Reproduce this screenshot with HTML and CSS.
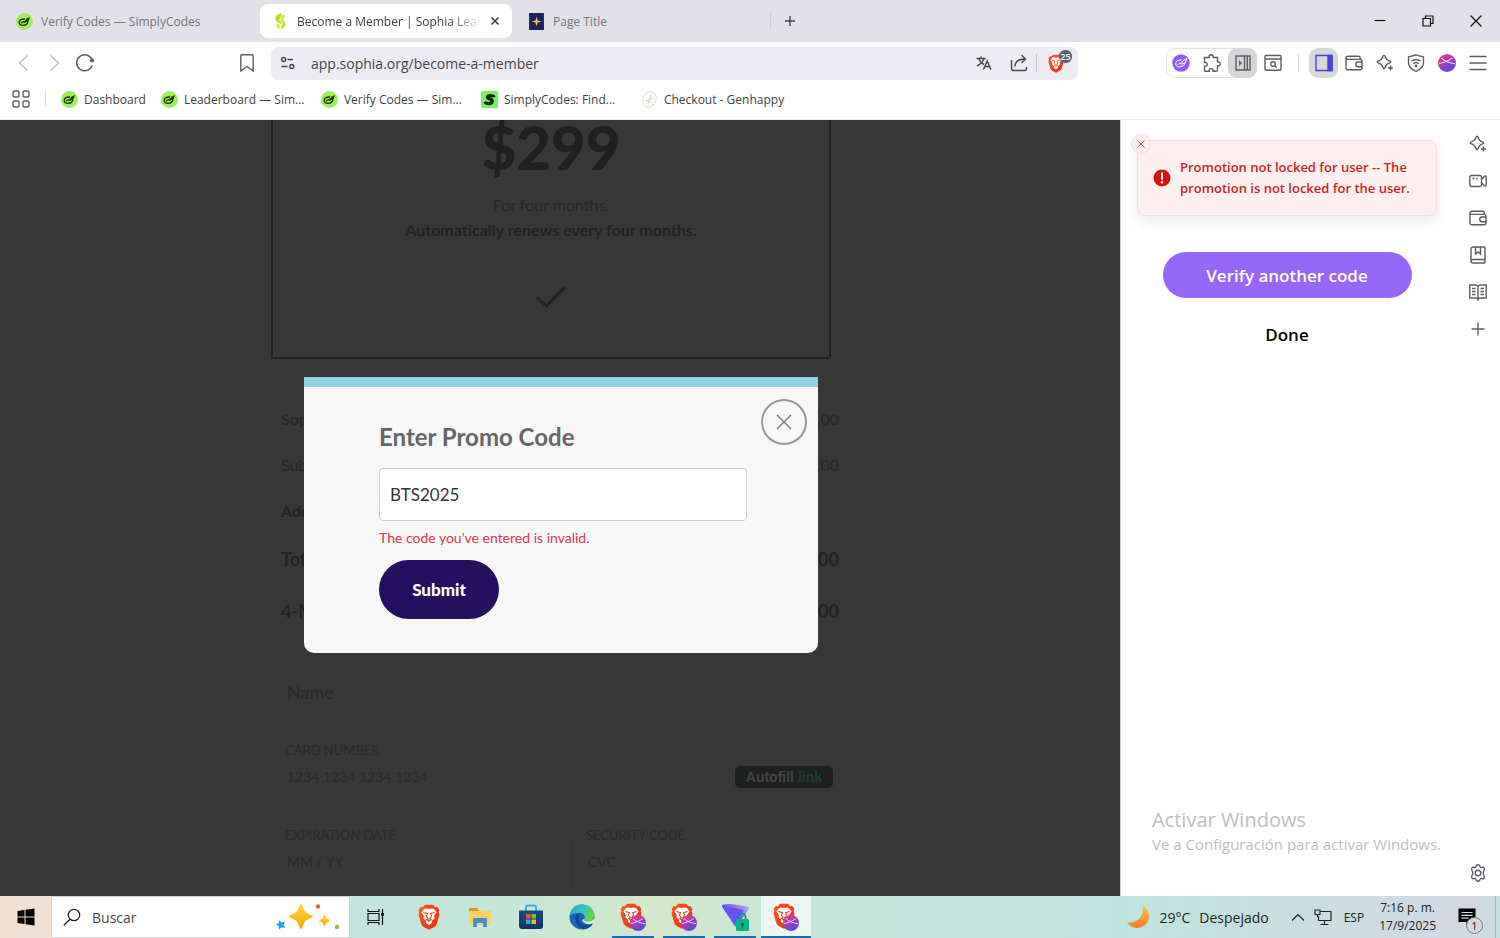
FILE: index.html
```html
<!DOCTYPE html>
<html lang="es">
<head>
<meta charset="utf-8">
<title>Become a Member | Sophia Learning</title>
<link rel="stylesheet" href="styles.css">
</head>
<body>
<svg class="defs" aria-hidden="true">
  <defs>
    <linearGradient id="gStar" x1="0" y1="0" x2="0" y2="1"><stop offset="0" stop-color="#ffd83d"/><stop offset="1" stop-color="#f5a70a"/></linearGradient>
    <linearGradient id="gBall" x1="0" y1="0" x2=".6" y2="1"><stop offset="0" stop-color="#ef3f7f"/><stop offset=".5" stop-color="#a83bb5"/><stop offset="1" stop-color="#5a4be0"/></linearGradient>
    <linearGradient id="gLion" x1="0" y1="0" x2="1" y2="1"><stop offset="0" stop-color="#ff5a20"/><stop offset="1" stop-color="#f0260c"/></linearGradient>
    <linearGradient id="gStore" x1="0" y1="0" x2="0" y2="1"><stop offset="0" stop-color="#1b4b86"/><stop offset="1" stop-color="#12335f"/></linearGradient>
    <linearGradient id="gEdge" x1="0" y1="0" x2="1" y2=".3"><stop offset="0" stop-color="#2aa5e2"/><stop offset=".6" stop-color="#36c4b4"/><stop offset="1" stop-color="#63d64a"/></linearGradient>
    <linearGradient id="gVpn" x1="0" y1="1" x2="1" y2="0"><stop offset="0" stop-color="#4ccbd0"/><stop offset=".45" stop-color="#5b4df0"/><stop offset="1" stop-color="#c9b8f5"/></linearGradient>
    <linearGradient id="gMoon" x1="0" y1="0" x2="0" y2="1"><stop offset="0" stop-color="#fbc437"/><stop offset="1" stop-color="#f0802a"/></linearGradient>
  </defs>
  <symbol id="tag" viewBox="0 0 16 16"><circle cx="8" cy="8" r="8" fill="#9ef05a" stroke="none"/><path d="M8.500 5.700C5.500 5.400 3 6.500 3 8.800c0 2 1.700 2.900 3.700 2.800 2.500-.1 4.100-1.500 4.600-3.600M5 9.700c.7-1.500 2-1.900 3-1" fill="none" stroke="#23380f" stroke-width="1.300"/><path d="M13.300 3.700 10 5.200 7.300 8.400l.7 1.100 3.800-1.700Z" fill="#23380f" stroke="none"/></symbol>
  <symbol id="spark" viewBox="0 0 18 18"><path d="M8 1.200c.5 0 .8.5 1 1.200.8 2.700 1.700 3.700 4.500 4.500 1.600.5 1.600 1.500 0 2-2.800.9-3.700 1.900-4.500 4.600-.5 1.600-1.500 1.600-2 0C6.200 10.800 5.200 9.800 2.500 8.900c-1.600-.5-1.600-1.500 0-2C5.200 6.100 6.200 5.100 7 2.400c.2-.7.5-1.200 1-1.200Z"/><path d="M14.500 11.500v5M12 14h5"/></symbol>
  <symbol id="wallet" viewBox="0 0 18 18"><path d="M15.200 5.400V3.800c0-1-.5-1.500-1.500-1.500H3C1.800 2.300 1 3 1 3.900s.8 1.500 2 1.500h12c1.200 0 2 .7 2 1.800v6.600c0 1.300-.7 2-2 2H3c-1.300 0-2-.7-2-2V3.900M17 8h-3.800c-1.500 0-2.500 1-2.500 2.300s1 2.400 2.500 2.400H17"/></symbol>
  <symbol id="lion" viewBox="0 0 22 26"><path d="M7 .8h8l2.200 2.400 2-.3 2.200 3-.8 2.200.9 2.500-2.700 9.100c-.6 2-1.700 3-7.800 6-6.100-3-7.200-4-7.800-6L.5 10.600l.9-2.500-.8-2.200 2.200-3 2 .3Z" fill="url(#gLion)" stroke="none"/><path d="M8.200 4.400l2.800.7 2.800-.7 2.200.5 2.600 3.700-2.500 3.500.4 2.400-3 2.500 1 1.300-3.500 2.900-3.500-2.900 1-1.300-3-2.500.4-2.400-2.500-3.500L6 4.900Z" fill="#fff" stroke="none"/><path d="M5.500 8.500 9.400 9.600 8.500 12 9.700 14.200M16.500 8.500l-3.900 1.100.9 2.400-1.200 2.200M8.800 15.500l2.200-1 2.200 1-2.200 1.700Z" fill="none" stroke="#f0401a" stroke-width="1.100"/></symbol>
  <symbol id="ball" viewBox="0 0 16 16"><circle cx="8" cy="8" r="8" fill="url(#gBall)" stroke="none"/><path d="M.8 8.500c4-.5 8-2.300 12-4.800M3 3.700c3 2.700 7.200 4.600 12.300 4.900" fill="none" stroke="#f6dcff" stroke-width=".9"/></symbol>
  <symbol id="brave" viewBox="0 0 28 30"><use href="#lion" width="22" height="26" x="1" y="1"/><use href="#ball" x="11" y="13" width="16" height="16"/></symbol>
</svg>

<header class="tabs">
  <div class="tab"><svg class="fav"><use href="#tag"/></svg><span class="title">Verify Codes — SimplyCodes</span></div>
  <div class="tab active"><svg class="fav" viewBox="0 0 16 16"><path d="M8.500.2C4.500 1 2.500 3.500 3.200 6.200 3.600 7.800 5 8.700 7 9.800L9.500 4Z" fill="#b9d930"/><path d="M4 9.200 7.500 11.200 6.800 15.800C4.800 14.500 3.700 12 4 9.200Z" fill="#d9e94a"/><path d="M9.500.5 12 2.800 10 6.500c3 1.500 3.300 4.500 1.200 7-1 1.200-2 1.900-3.200 2.300L9 11 7 9.200Z" fill="#c8e02e"/><path d="M10 1 7.300 6.700l2.500 2-1.900 4.800" fill="none" stroke="#fff" stroke-width=".8"/></svg><span class="title fade">Become a Member | Sophia Learning</span><button class="plain" aria-label="Cerrar pestaña"><svg class="i10" viewBox="0 0 10 10"><path d="m1.500 1.500 7 7m0-7-7 7" stroke-width="1.700"/></svg></button></div>
  <div class="tab"><svg class="fav" viewBox="0 0 16 16"><path d="M1 0h14v16H1Z" fill="#1d2260"/><path d="M8 3.200 9 7l3.800 1L9 9l-1 3.800L7 9 3.200 8 7 7Z" fill="#f5c542"/></svg><span class="title">Page Title</span></div>
  <button class="plain newtab" aria-label="Nueva pestaña"><svg class="i12" viewBox="0 0 12 12"><path d="M6 1v10M1 6h10"/></svg></button>
  <div class="winctl">
    <button class="plain" aria-label="Minimizar"><svg class="i12" viewBox="0 0 12 12"><path d="M.5 5.500h11"/></svg></button>
    <button class="plain" aria-label="Restaurar"><svg class="i12" viewBox="0 0 12 12"><path d="M1 3.500h7.500V11H1ZM3.500 3.500V1H11v7.500H8.500"/></svg></button>
    <button class="plain" aria-label="Cerrar"><svg class="i12" viewBox="0 0 12 12"><path d="m.5.5 11 11m0-11-11 11"/></svg></button>
  </div>
</header>

<div class="toolbar">
  <div class="nav">
    <button class="plain off" aria-label="Atrás"><svg class="i18" viewBox="0 0 18 18"><path d="M12.500 1.500 4.500 9l8 7.500"/></svg></button>
    <button class="plain off" aria-label="Adelante"><svg class="i18" viewBox="0 0 18 18"><path d="m5.500 1.500 8 7.500-8 7.500"/></svg></button>
    <button class="plain" aria-label="Recargar"><svg class="i20" viewBox="0 0 20 20"><path d="M17.200 12.500A8 8 0 1 1 17 6.500" stroke-width="1.500"/><circle cx="17" cy="7.500" r="2.100" fill="currentColor" stroke="none"/></svg></button>
    <button class="plain mark" aria-label="Guardar marcador"><svg class="i18" viewBox="0 0 18 18"><path d="M2.800 2c0-.8.4-1.200 1.200-1.200h10c.8 0 1.200.4 1.200 1.200v15L9 12.500 2.800 17Z"/></svg></button>
  </div>
  <div class="address">
    <svg class="i16" viewBox="0 0 16 16"><circle cx="3.700" cy="4.500" r="2"/><path d="M7.500 4.500H13M1.500 11.500h6"/><circle cx="11.800" cy="11.500" r="2"/></svg>
    <input type="text" aria-label="Dirección" value="app.sophia.org/become-a-member">
    <button class="plain" aria-label="Traducir"><svg class="i16" viewBox="0 0 16 16"><path d="M.5 3.500h9M5 1.500v2M8 3.500C7 7 4 9.500 1 11M2.500 3.500C4 7 6 8.500 8 9.500M7.500 14.500l3.700-8.500 3.700 8.500M8.800 11.500h4.800"/></svg></button>
    <button class="plain share" aria-label="Compartir"><svg class="i18" viewBox="0 0 18 18"><path d="M1.500 6v8.500c0 1.200.6 2 2 2h11c1.300 0 2-.8 2-2V13M5 12.500c0-5 3.500-7.500 10-7.500M11.500 1l4 4-4 4"/></svg></button>
    <button class="plain shields" aria-label="Shields"><svg class="shield"><use href="#lion"/></svg><span class="count">25</span></button>
  </div>
  <div class="ext">
    <button class="plain" aria-label="SimplyCodes"><svg class="i18" viewBox="0 0 18 18"><circle cx="9" cy="9" r="8.700" fill="#8f5cf7" stroke="none"/><path d="M9.500 6C6 5.700 3.700 7.200 3.700 9.800c0 2 1.800 3.200 4 3.100 3-.1 4.800-1.900 5.300-4.200M6 10.800c.8-1.700 2.300-2 3.300-1M8.500 10.300l3-4 3.300-1.800-1.300 4-4 1.800" stroke="#fff" stroke-width="1"/></svg></button>
    <button class="plain" aria-label="Extensiones"><svg class="i18" viewBox="0 0 18 18"><path d="M1.500 3.500h4.800C5.900 1.800 6.600.8 8.200.8s2.300 1 1.900 2.700h4.400v4.300c1.600-.4 2.700.3 2.700 2s-1.100 2.400-2.700 2V16c0 .8-.4 1.200-1.200 1.200h-3.200c.3-1.700-.4-2.600-1.900-2.600s-2.200.9-1.900 2.600H2.700c-.8 0-1.200-.4-1.200-1.200v-3.700c1.800.3 2.700-.4 2.700-1.900S3.300 8.200 1.500 8.500Z"/></svg></button>
    <button class="plain on" aria-label="Panel de extensión"><svg class="i16" viewBox="0 0 16 16"><path d="M1 1h14v14H1ZM9.500 1v14M12.300 1v14"/><path d="M4 5v6l3-3Z" fill="currentColor" stroke="none"/></svg></button>
  </div>
  <div class="tools">
    <button class="plain" aria-label="Buscar en página"><svg class="i18" viewBox="0 0 18 18"><path d="M1 2.500c0-.6.400-1 1-1h14c.6 0 1 .4 1 1V15c0 .8-.5 1.300-1.300 1.300H2.300C1.500 16.300 1 15.800 1 15ZM1 5h16"/><circle cx="9" cy="10" r="2.300"/><path d="m10.700 11.700 2 2"/></svg></button>
    <span class="sep"></span>
    <button class="plain panel" aria-label="Panel lateral"><svg class="i18" viewBox="0 0 18 18"><path d="M1 1.500h16v15H1Z" stroke="#4a43d8"/><path d="M13 1.500h4v15h-4Z" fill="#4a43d8" stroke="#4a43d8"/></svg></button>
    <button class="plain" aria-label="Cartera"><svg class="i18"><use href="#wallet"/></svg></button>
    <button class="plain" aria-label="Leo"><svg class="i18"><use href="#spark"/></svg></button>
    <button class="plain" aria-label="VPN"><svg class="i18" viewBox="0 0 18 18"><path d="M9 .8 16.500 3v5.500c0 4-2.500 6.700-7.500 8.800-5-2.100-7.500-4.800-7.500-8.800V3Z"/><path d="M4.500 7.300c2.800-2.200 6.200-2.200 9 0M6.300 9.600c1.700-1.300 3.700-1.300 5.400 0"/><circle cx="9" cy="11.800" r=".7" fill="currentColor"/></svg></button>
    <button class="plain" aria-label="Perfil"><svg class="i18"><use href="#ball"/></svg></button>
    <button class="plain" aria-label="Menú"><svg class="i18" viewBox="0 0 18 18"><path d="M.5 2.500h17M.5 9h17M.5 15.500h17"/></svg></button>
  </div>
</div>

<nav class="bookmarks">
  <button class="plain apps" aria-label="Grupos de pestañas"><svg class="i18" viewBox="0 0 18 18"><rect x="1" y="1" width="6" height="6" rx="1.500"/><rect x="11" y="1" width="6" height="6" rx="1.500"/><rect x="1" y="11" width="6" height="6" rx="1.500"/><rect x="11" y="11" width="6" height="6" rx="1.500"/></svg></button>
  <a href="#"><svg class="fav"><use href="#tag"/></svg>Dashboard</a>
  <a class="long" href="#"><svg class="fav"><use href="#tag"/></svg>Leaderboard — Sim...</a>
  <a class="long" href="#"><svg class="fav"><use href="#tag"/></svg>Verify Codes — Sim...</a>
  <a class="long" href="#"><svg class="fav" viewBox="0 0 16 16"><rect width="16" height="16" rx="1.500" fill="#7df05f"/><path d="M12.300 5.800C12 4.600 10.600 4.300 9 4.300c-1.700 0-2.900.5-2.900 1.600 0 2.200 4.700 1 4.500 3.600-.1 1.600-1.600 2.300-3.500 2.300-1.700 0-2.900-.5-3.300-1.700" class="ess"/></svg>SimplyCodes: Find...</a>
  <a class="long" href="#"><svg class="fav" viewBox="0 0 16 16"><ellipse cx="8" cy="8" rx="6" ry="7.600" fill="none" stroke="#e3e1d2" transform="rotate(25 8 8)"/><path d="M9.500 3 6.300 13M4.500 9.500l7-3M7 9l2 2" stroke="#d6d3bf" fill="none"/></svg>Checkout - Genhappy</a>
</nav>

<main class="main">
  <section class="page">
    <div class="checkout">
      <div class="plan">
        <p class="price">$299</p>
        <p>For four months.</p>
        <p class="strong">Automatically renews every four months.</p>
        <svg class="check" viewBox="0 0 32 24"><path d="m1.500 12 10 9L30 2"/></svg>
      </div>
      <dl class="summary">
        <div><dt>Sophia</dt><dd>$299.00</dd></div>
        <div><dt>Subtotal</dt><dd>$299.00</dd></div>
        <div class="strong"><dt>Add</dt></div>
        <div class="strong total"><dt>Total</dt><dd>$299.00</dd></div>
        <div class="strong total"><dt>4-Month</dt><dd>$299.00</dd></div>
      </dl>
      <form class="card">
        <div class="field"><input class="name" type="text" aria-label="Name" placeholder="Name"></div>
        <div class="field"><label for="num">CARD NUMBER</label><input id="num" type="text" placeholder="1234 1234 1234 1234"><button type="button" class="autofill">Autofill <span>link</span></button></div>
        <div class="pair">
          <div class="field"><label for="exp">EXPIRATION DATE</label><input id="exp" type="text" placeholder="MM / YY"></div>
          <div class="field"><label for="cvc">SECURITY CODE</label><input id="cvc" type="text" placeholder="CVC"></div>
        </div>
      </form>
    </div>
    <div class="modal" role="dialog" aria-labelledby="promo-title">
      <button class="close" aria-label="Close"><svg class="i16" viewBox="0 0 16 16"><path d="m1 1 14 14m0-14L1 15"/></svg></button>
      <form>
        <h2 id="promo-title"><label for="promo">Enter Promo Code</label></h2>
        <input id="promo" type="text" value="BTS2025">
        <p class="error">The code you've entered is invalid.</p>
        <button type="button" class="submit">Submit</button>
      </form>
    </div>
  </section>
  <aside class="side">
    <div class="alert" role="alert">
      <button class="dismiss" aria-label="Cerrar aviso"><svg class="i10" viewBox="0 0 10 10"><path d="m1.500 1.500 7 7m0-7-7 7" stroke-width="1"/></svg></button>
      <svg class="bang" viewBox="0 0 18 18"><circle cx="9" cy="9" r="8.500" fill="#da1010"/><path d="M9 4.300v5.800" stroke="#fff" stroke-width="2" stroke-linecap="round"/><circle cx="9" cy="13.300" r="1.200" fill="#fff"/></svg>
      <p>Promotion not locked for user -- The promotion is not locked for the user.</p>
    </div>
    <button class="verify">Verify another code</button>
    <button class="done">Done</button>
    <div class="activate"><p class="big">Activar Windows</p><p>Ve a Configuración para activar Windows.</p></div>
  </aside>
  <nav class="rail">
    <button class="plain" aria-label="Leo"><svg class="i18"><use href="#spark"/></svg></button>
    <button class="plain" aria-label="Talk"><svg class="i18" viewBox="0 0 18 18"><path d="M2.500 3.500h8.300c1 0 1.700.7 1.700 1.700v7.600c0 1-.7 1.700-1.700 1.700H2.500c-1 0-1.700-.7-1.700-1.700V5.200c0-1 .7-1.700 1.700-1.700ZM12.500 7.500l2.700-3c.9-.9 2-.6 2 .5v8c0 1.100-1.100 1.400-2 .5l-2.700-3M3.500 6.500h2M7 6.500h1.500"/></svg></button>
    <button class="plain" aria-label="Cartera"><svg class="i18"><use href="#wallet"/></svg></button>
    <button class="plain" aria-label="Marcadores"><svg class="i18" viewBox="0 0 18 18"><path d="M16 13.500V2c0-.7-.3-1-1-1H4.500C3 1 2 1.800 2 3.200v11.500C2 16.200 3 17 4.500 17H16M16 13.500H4.500C3 13.500 2 14 2 15.300M16 13.500V17M6.500 1v7L9 6l2.500 2V1"/></svg></button>
    <button class="plain" aria-label="Lista de lectura"><svg class="i18" viewBox="0 0 18 18"><path d="M9 3.500C8.500 2.500 7.500 2 6.500 2H.8v13h6C8 15 8.700 15.500 9 16.500c.3-1 1-1.500 2.200-1.500h6V2h-5.700c-1 0-2 .5-2.500 1.500ZM9 3.500V18M3 5.500h3.500M3 8.500h3.500M3 11.500h3.500M11.500 5.500H15M11.500 8.500H15M11.500 11.500H15"/></svg></button>
    <button class="plain" aria-label="Agregar"><svg class="i18" viewBox="0 0 18 18"><path d="M9 2.500v13M2.500 9h13"/></svg></button>
    <button class="plain gear" aria-label="Configuración"><svg class="i18" viewBox="0 0 18 18"><path d="M7.200 2c.4-1.600 3.200-1.600 3.600 0 .3 1.300 1 1.700 2.300 1.300 1.700-.5 3.100 1.900 1.900 3.100-1 1-1 4.200 0 5.200 1.200 1.200-.2 3.600-1.900 3.100-1.300-.4-2 0-2.300 1.300-.4 1.600-3.200 1.600-3.600 0-.3-1.300-1-1.700-2.300-1.300-1.700.5-3.100-1.900-1.900-3.100 1-1 1-4.200 0-5.200C1.800 5.200 3.200 2.800 4.900 3.300 6.200 3.700 6.900 3.300 7.200 2Z"/><circle cx="9" cy="9" r="2.800"/></svg></button>
  </nav>
</main>

<footer class="taskbar">
  <button class="task start" aria-label="Inicio"><svg class="i18" viewBox="0 0 18 18"><path d="m.5 3 7-1v6.500h-7ZM8.500 1.800l9-1.300v8h-9ZM.5 9.500h7V16l-7-1ZM8.500 9.500h9v8l-9-1.300Z" fill="#000" stroke="none"/></svg></button>
  <label class="search">
    <svg class="i18" viewBox="0 0 18 18"><circle cx="11" cy="7" r="5.700"/><path d="M7 11.200.8 17.300"/></svg>
    <input type="text" aria-label="Buscar" placeholder="Buscar">
    <svg class="sparkles" viewBox="0 0 66 28"><path d="M26 1c1.500 0 2.500 6 4.500 8S38 12 38 13.500 32.500 16 30.500 18 27.500 26 26 26s-2.500-6-4.500-8-7.500-3-7.500-4.500S19.500 11 21.500 9 24.500 1 26 1Z" fill="url(#gStar)"/><path d="M49.500 11.500c1 0 1 3 2 4s3.500 1 3.500 2-2.500 1.200-3.500 2.200-1 3.300-2 3.300-1-2.300-2-3.300-3.500-1.200-3.500-2.200 2.500-1 3.500-2 1-4 2-4Z" fill="url(#gStar)"/><path d="m4 17 2.600 2.500L10 18.500 8.500 22l1.800 3-3.500-.7L4 26.500 3.600 23 1 21l3-1Z" fill="#1ca3e8"/><circle cx="43" cy="3.500" r="2.200" fill="#e2612c"/><circle cx="62" cy="24" r="2.200" fill="#7fc142"/></svg>
  </label>
  <button class="task view" aria-label="Vista de tareas"><svg class="i18" viewBox="0 0 18 18"><path d="M1 1v2.500h11V1M1 17v-2.500h11V17M1 5.500h11v7H1ZM15.500 1v16" stroke="#111"/><path d="M14 5h3v3h-3Z" fill="#111" stroke="none"/></svg></button>
  <div class="pinned">
    <button class="task" aria-label="Brave"><svg class="lion"><use href="#lion"/></svg></button>
    <button class="task" aria-label="Explorador"><svg class="app" viewBox="0 0 26 26"><path d="M2 4h8l2 2.500h12V21H2Z" fill="#f9d262"/><path d="M2 4h8l2 3H2Z" fill="#d79a18"/><path d="M6 23v-7.500c0-1 .7-1.500 1.500-1.500h11c.8 0 1.500.5 1.500 1.500V23h-4v-4h-6v4Z" fill="#3f8fd2"/></svg></button>
    <button class="task" aria-label="Microsoft Store"><svg class="app" viewBox="0 0 26 26"><path d="M8 7V3.500C8 2 8.500 1.500 10 1.500h6c1.500 0 2 .5 2 2V7" fill="none" stroke="#2fb4e8" stroke-width="2"/><path d="M1 6.500h24V22c0 2-1 3-3 3H4c-2 0-3-1-3-3Z" fill="url(#gStore)"/><path d="M8 10h4.500v4.500H8Z" fill="#ef5325"/><path d="M13.500 10H18v4.500h-4.500Z" fill="#7fbb2c"/><path d="M8 15.500h4.500V20H8Z" fill="#31a5e7"/><path d="M13.500 15.500H18V20h-4.500Z" fill="#f6b91b"/></svg></button>
    <button class="task" aria-label="Edge"><svg class="app" viewBox="0 0 26 26"><circle cx="13" cy="13" r="12.500" fill="#1467bd"/><path d="M.6 12C1.500 5 6.800.5 13 .5c7 0 12.500 4.800 12.500 10.500 0 4-3 6.500-6.800 6.500-2.700 0-4-1-3.500-2.200 1.800-3.300-.6-6.300-5-6.300C5.500 9 2 10 .6 12Z" fill="url(#gEdge)"/><path d="M10.300 9C7.500 10 6 12.500 6.300 16c.4 4.500 4.200 8.500 8.700 9.300 4-.5 7-2.500 8.800-5.400-3 1.700-7.500 1.900-10.400.3C9.500 18 8.600 14 10.600 11.300 12 9.500 11.500 9 10.300 9Z" fill="#0f4a96"/><path d="M15.200 15.300c-.5 1.200.8 2.200 3.500 2.200 2.800 0 5-1.300 6.800-3.200v4.200c-3.500 2.700-9.500 2-11.600-.7-1-1.500.2-3.500 1.300-2.500Z" fill="#d3e9da"/></svg></button>
    <button class="task open" aria-label="Brave"><svg class="brave"><use href="#brave"/></svg></button>
    <button class="task open" aria-label="Brave"><svg class="brave"><use href="#brave"/></svg></button>
    <button class="task open" aria-label="Proton VPN"><svg class="brave" viewBox="0 0 28 30"><path d="M2.500 2.500C10 .8 18 3 26 4.500c2 .4 2.400 1.700 1.400 3L16.500 23.500c-1 1.500-2.500 1.400-3.300-.1L1.300 5C.5 3.800 1 2.800 2.500 2.500Z" fill="url(#gVpn)"/><path d="M1.600 3.500C8 5 14 6 20 7.500c2 .5 2.300 1.700 1.200 3.200l-7 11Z" fill="#6a50f2"/><path d="M18.500 18v-2.500c0-5 6-5 6 0V18" fill="none" stroke="#079a6c" stroke-width="1.700"/><rect x="15" y="17" width="13" height="12" rx="1.500" fill="#04b482"/><circle cx="21.500" cy="22" r="1.300" fill="#056346"/><path d="M21.500 22v3.500" stroke="#056346"/></svg></button>
    <button class="task open current" aria-label="Brave"><svg class="brave"><use href="#brave"/></svg></button>
  </div>
  <div class="tray">
    <button class="weather"><svg class="moon" viewBox="0 0 24 24"><path d="M16.500.5c7 4.500 8.500 12.500 4 18-5 6-15 6-19.500-1 9 1 18-5 15.500-17Z" fill="url(#gMoon)"/></svg><span>29°C</span><span>Despejado</span></button>
    <button class="plain" aria-label="Iconos ocultos"><svg class="i14" viewBox="0 0 14 14"><path d="M1 10.500 7 4.500l6 6"/></svg></button>
    <button class="plain" aria-label="Red"><svg class="i18" viewBox="0 0 18 18"><path d="M6 3.500h11v9H4.500V8M10.500 12.500v3.500M6.500 16.500h8M1 2h5v4.500H1ZM3.500 6.500V9"/></svg></button>
    <button class="plain lang">ESP</button>
    <button class="plain clock"><span>7:16 p. m.</span><span>17/9/2025</span></button>
    <button class="plain notes" aria-label="Notificaciones"><svg class="i18" viewBox="0 0 18 18"><path d="M.5.500h17v13.500H12L8.500 17v-3h-8Z" fill="#000" stroke="none"/><path d="M3.500 4.500h11M3.500 7.300h11M3.500 10.100h7" stroke="#d2dbe0"/></svg><span class="badge">1</span></button>
  </div>
</footer>
</body>
</html>
```

FILE: styles.css
```css
* { box-sizing: border-box; }

body {
  margin: 0;
  height: 100vh;
  display: flex;
  flex-direction: column;
  overflow: hidden;
  font-family: "Open Sans", "Noto Sans", sans-serif;
  font-size: 12px;
  color: #3f3f46;
  background: #fff;
}

p, h2, dl, dd { margin: 0; }
button, input { font: inherit; color: inherit; }
button { cursor: pointer; }
svg { flex: none; fill: none; stroke: currentColor; stroke-width: 1.4; }
.defs { position: absolute; width: 0; height: 0; }

.i10 { width: 10px; height: 10px; }
.i12 { width: 12px; height: 12px; }
.i14 { width: 14px; height: 14px; }
.i16 { width: 16px; height: 16px; }
.i18 { width: 18px; height: 18px; }
.i20 { width: 20px; height: 20px; }
.fav { width: 17px; height: 17px; stroke: none; stroke-width: 1; }
.ess { stroke: #10240c; stroke-width: 3; }

.plain {
  display: flex;
  align-items: center;
  justify-content: center;
  padding: 0;
  border: 0;
  background: none;
}

/* Tab strip */
.tabs {
  display: flex;
  align-items: center;
  height: 42px;
  padding-left: 8px;
  background: #e2e1e7;
}
.tab {
  display: flex;
  align-items: center;
  gap: 8px;
  width: 252px;
  height: 34px;
  padding: 0 12px 0 8px;
  border-radius: 8px;
  color: #74747b;
}
.tab.active { padding-left: 12px; background: #fff; color: #3f3f46; }
.tab.active + .tab { padding-left: 16px; }
.title { flex: 1; overflow: hidden; white-space: nowrap; }
.fade { mask-image: linear-gradient(90deg, #000 82%, transparent 100%); }
.newtab { width: 38px; height: 18px; border-left: 1px solid #cfced4; margin-left: 6px; }
.winctl { display: flex; margin-left: auto; color: #111; }
.winctl svg { stroke-width: 1.2; }
.winctl .plain { width: 48px; height: 42px; }

/* Toolbar */
.toolbar {
  display: flex;
  align-items: center;
  height: 42px;
  padding-right: 7px;
  color: #5c5c63;
}
.nav {
  display: flex;
  align-items: center;
  gap: 12px;
  width: 271px;
  padding: 0 15px;
}
.off { color: #bdbdc2; }
.mark { margin-left: auto; }
.address {
  display: flex;
  flex: 1;
  align-items: center;
  gap: 18px;
  height: 33px;
  margin-right: 88px;
  padding: 0 4px 0 9px;
  border-radius: 8px;
  background: #edecf2;
  color: #44444b;
}
.address input {
  flex: 1;
  min-width: 0;
  margin-left: -3px;
  padding: 0;
  border: 0;
  background: none;
  font-size: 14px;
}
.shields { position: relative; width: 38px; height: 18px; border-left: 1px solid #c4c3ca; margin-left: -10px; }
.shield { width: 16px; height: 19px; }
.count {
  position: absolute;
  top: -4px;
  right: 2px;
  width: 13px;
  border-radius: 6px;
  background: #5f6270;
  color: #fff;
  font-size: 9px;
  font-weight: 600;
  line-height: 13px;
  text-align: center;
}
.ext {
  display: flex;
  height: 30px;
  border: 1px solid #e4e3e8;
  border-radius: 9px;
}
.ext .plain { width: 35px; }
.ext .plain:first-child { width: 27px; }
.ext .on { width: 29px; margin: -1px; border-radius: 9px; background: #d6d6d8; }
.tools { display: flex; align-items: center; }
.tools .plain { width: 31px; height: 30px; }
.tools .panel { width: 29px; border-radius: 9px; background: #d8d8da; }
.sep { width: 1px; height: 18px; margin: 0 10px; background: #d8d8dc; }

/* Bookmarks */
.bookmarks {
  display: flex;
  align-items: center;
  gap: 15px;
  height: 36px;
  padding: 0 12px 5px;
  border-bottom: 1px solid #ececef;
}
.bookmarks a {
  display: flex;
  align-items: center;
  gap: 6px;
  color: #3f3f46;
  text-decoration: none;
  white-space: nowrap;
}
.bookmarks .long { width: 145px; }
.apps { width: 34px; height: 16px; padding-right: 15px; border-right: 1px solid #d8d8dc; color: #5c5c63; }

.main { display: flex; flex: 1; min-height: 0; }

/* Dimmed checkout page */
.page {
  position: relative;
  flex: 1;
  min-width: 0;
  overflow: hidden;
  background: #383838;
  color: #292929;
  font-family: Lato, "Open Sans", sans-serif;
  font-size: 16px;
}
.checkout { width: 578px; margin: 0 auto; }
.plan {
  display: flex;
  flex-direction: column;
  align-items: center;
  width: 560px;
  height: 239px;
  border: 2px solid #222226;
  border-top: 0;
  line-height: 25px;
}
.price { color: #202020; font-size: 60px; font-weight: 900; line-height: 54px; margin-bottom: 18px; }
.strong { font-weight: 700; color: #242424; }
.check { width: 32px; height: 24px; margin-top: 43px; stroke: #1d2620; stroke-width: 3; }
.summary { padding: 49px 10px 0; line-height: 22px; }
.summary div { display: flex; justify-content: space-between; margin-bottom: 24px; }
.summary .total { font-size: 18px; line-height: 26px; margin-bottom: 26px; }
.card { display: flex; flex-direction: column; gap: 30px; margin-top: 40px; color: #2b2b2b; }
.field { position: relative; display: flex; flex: 1; align-items: center; min-height: 55px; padding: 0 15px; border: 1px solid #363636; }
.field label { position: absolute; top: -9px; left: 10px; padding: 0 3px; background: #383838; font-size: 13px; line-height: 18px; }
.field input { flex: 1; min-width: 0; padding: 0; border: 0; background: none; font-size: 14px; }
.field .name { font-size: 18px; }
.field input::placeholder { color: #2b2b2b; opacity: 1; }
.pair { display: grid; grid-template-columns: 301px 1fr; }
.autofill { height: 22px; padding: 0 11px; border: 0; border-radius: 5px; background: #1e2020; color: #454545; font-family: "Liberation Sans", sans-serif; font-size: 14px; font-weight: 700; }
.autofill span { color: #1f3d2c; }

.modal {
  position: absolute;
  top: 257px;
  left: 50%;
  width: 514px;
  margin-left: -256px;
  padding: 35px 71px 34px 75px;
  border-top: 10px solid #8fd2e6;
  border-radius: 0 0 10px 10px;
  background: #f7f7f7;
  color: #666;
}
.modal form { display: flex; flex-direction: column; align-items: flex-start; }
.modal h2 { font-size: 24px; line-height: 30px; }
.modal input {
  width: 100%;
  height: 53px;
  margin-top: 16px;
  padding: 0 10px;
  border: 1px solid #ccc;
  border-radius: 4px;
  background: #fff;
  color: #333;
  font-size: 17px;
}
.error { margin-top: 8px; color: #d93850; font-size: 14px; line-height: 18px; }
.submit { width: 120px; height: 59px; margin-top: 13px; border: 0; border-radius: 30px; background: #24105e; color: #fff; font-size: 17px; font-weight: 900; }
.close {
  position: absolute;
  top: 12px;
  right: 11px;
  display: grid;
  place-items: center;
  width: 46px;
  height: 46px;
  padding: 0;
  border: 2px solid #969696;
  border-radius: 50%;
  background: none;
  color: #777;
}

/* Extension side panel */
.side {
  display: flex;
  flex-direction: column;
  align-items: center;
  width: 334px;
  padding: 20px 17px 41px 16px;
  border-left: 1px solid #d0d0d4;
}
.alert {
  position: relative;
  display: flex;
  align-items: center;
  align-self: stretch;
  gap: 9px;
  min-height: 76px;
  padding: 0 15px;
  border: 1px solid #fbdcdf;
  border-radius: 8px;
  background: #feeff0;
  color: #cf1f1f;
  font-size: 13px;
  font-weight: 600;
  line-height: 21px;
  box-shadow: 0 6px 14px rgba(0, 0, 0, .09);
}
.bang { width: 18px; height: 18px; stroke: none; }
.dismiss {
  position: absolute;
  top: -7px;
  left: -7px;
  display: grid;
  place-items: center;
  width: 20px;
  height: 20px;
  padding: 0;
  border: 1px solid #fbdcdf;
  border-radius: 50%;
  background: #feeff0;
  color: #d94a50;
}
.verify { width: 249px; height: 46px; margin-top: 36px; border: 0; border-radius: 23px; background: #9768f8; color: #fff; font-size: 17px; font-weight: 600; }
.done { margin-top: 22px; padding: 0; border: 0; background: none; color: #000; font-size: 17px; font-weight: 600; line-height: 30px; }
.activate { align-self: stretch; margin-top: auto; padding-left: 15px; color: #bdbdbd; font-size: 15px; line-height: 22px; white-space: nowrap; }
.activate .big { font-size: 20px; line-height: 26px; }

.rail { display: flex; flex-direction: column; align-items: center; gap: 19px; width: 46px; padding: 15px 0 14px 1px; color: #5c5c63; }
.gear { margin-top: auto; }

/* Windows taskbar */
.taskbar {
  display: flex;
  height: 42px;
  background: linear-gradient(90deg, #f2dfd0 0, #efe2d3 4%, #c0e5dd 24%, #c6e6d8 34%, #d2e9c9 44%, #c6e5da 54%, #bfe4de 75%, #c8dfdf 86%, #d2d7e2 98%, #c6dedd 100%);
  color: #222;
}
.task { display: grid; place-items: center; width: 50px; padding: 0; border: 0; background: none; }
.start { width: 51px; }
.search { display: flex; align-items: center; gap: 11px; width: 299px; padding: 0 8px 0 11px; border: 1px solid #d3d3d3; background: #fff; }
.search input { flex: 1; min-width: 0; padding: 0; border: 0; font-size: 14px; }
.search input::placeholder { color: #444; opacity: 1; }
.sparkles { width: 66px; height: 28px; stroke: none; }
.view { width: 52px; }
.view svg, .tray svg, .search svg { stroke-width: 1.2; }
.pinned { display: flex; gap: 1px; padding-left: 2px; }
.lion { width: 22px; height: 26px; }
.app { width: 26px; height: 26px; stroke: none; }
.brave { width: 28px; height: 30px; stroke: none; }
.open { background: linear-gradient(#0b6fc7, #0b6fc7) bottom / 42px 2px no-repeat; }
.current { background: linear-gradient(#0b6fc7, #0b6fc7) bottom / 50px 2px no-repeat, #edf6f2; }
.tray { display: flex; align-items: center; gap: 9px; margin-left: auto; margin-right: 4px; padding-right: 13px; border-right: 1px solid #aab4b8; }
.weather { display: flex; align-items: center; gap: 9px; margin-right: 13px; padding: 0; border: 0; background: none; font-size: 14px; }
.tray .moon { width: 24px; height: 24px; stroke: none; }
.lang { margin-left: 3px; }
.clock { flex-direction: column; margin-left: 6px; line-height: 18px; }
.notes { position: relative; margin-left: 13px; width: 24px; height: 24px; justify-content: flex-start; }
.badge { position: absolute; right: -1px; bottom: -5px; width: 17px; border: 1px solid #777; border-radius: 9px; background: #d5d9de; font-size: 11px; line-height: 15px; }
```
